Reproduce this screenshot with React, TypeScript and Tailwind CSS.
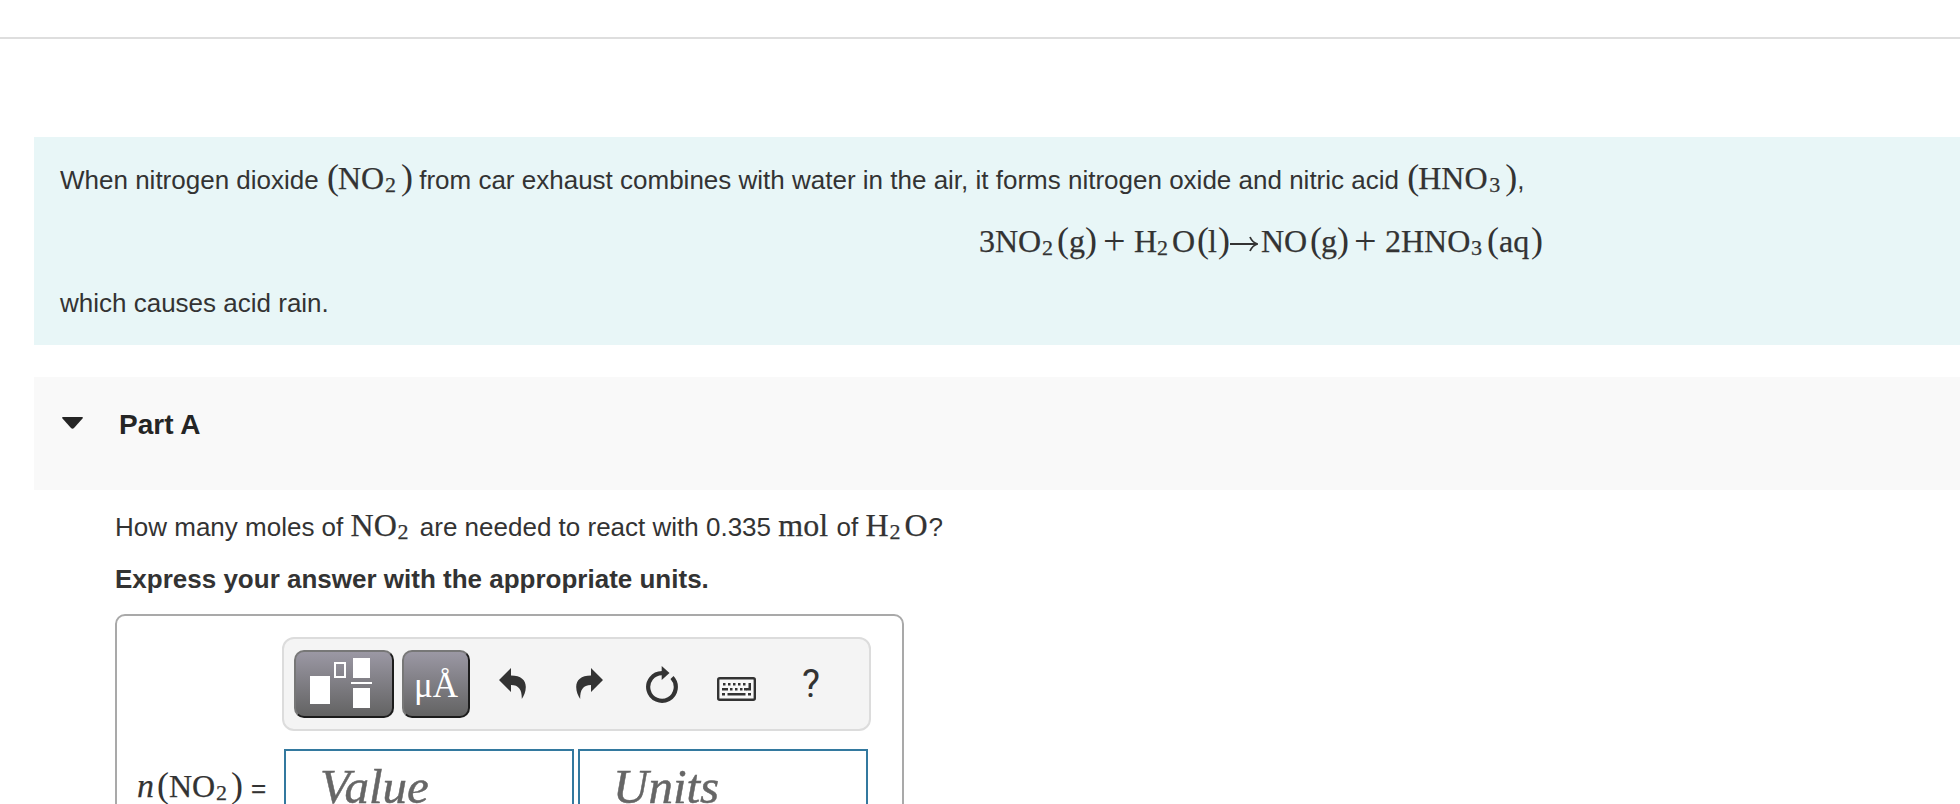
import type { ReactNode } from "react";

const MATH = "font-['Liberation_Serif',serif] text-[32px] [-webkit-text-stroke:0.25px_#333]";

function Tok({ className, children }: { className: string; children: ReactNode }) {
  return <span className={`inline-block leading-none ${className}`}>{children}</span>;
}

function Sub({ className, children }: { className: string; children: ReactNode }) {
  return (
    <span className={`mr-px -ml-px inline-block translate-y-[3px] text-[22px] leading-none ${className}`}>
      {children}
    </span>
  );
}

function Paren({ className, children }: { className: string; children: ReactNode }) {
  return (
    <span className={`inline-block text-[36px] leading-none [-webkit-text-stroke:0px] ${className}`}>
      {children}
    </span>
  );
}

function Plus() {
  return (
    <span className="inline-block w-[31px] translate-y-[2px] text-[40px] leading-none [-webkit-text-stroke:0px]">
      +
    </span>
  );
}

function ArrowIcon({ flip = false }: { flip?: boolean }) {
  return (
    <svg
      viewBox="0 0 27 31"
      className={flip ? "h-[31px] w-[27px] -scale-x-100" : "h-[31px] w-[27px]"}
      fill="#333"
    >
      <path d="M0 12 12 0V7.500C22 7.500 26.800 12 26.800 19 26.800 24 24.800 28 22.800 31 23 22 20 17 12 17V24Z" />
    </svg>
  );
}

function ResetIcon() {
  return (
    <svg viewBox="0 0 32 37" className="h-[37px] w-8">
      <path
        d="M26 11.500A13.800 13.800 0 1 1 16 7.200"
        fill="none"
        stroke="#333"
        strokeWidth="4.200"
      />
      <path d="M15.700 0 23.500 7 15.700 14Z" fill="#333" />
    </svg>
  );
}

function KeyboardIcon() {
  return (
    <svg viewBox="0 0 39 24" className="h-6 w-[39px]" fill="#333">
      <rect x="1.200" y="1.200" width="36.600" height="21.600" rx="1.500" fill="#f8f8f8" stroke="#333" strokeWidth="2.400" />
      {[6, 11, 16, 21, 26].map((x) => (
        <rect key={x} x={x} y="6" width="2.500" height="2.500" />
      ))}
      {[13, 18, 23, 27].map((x) => (
        <rect key={x} x={x} y="11" width="2.500" height="2.500" />
      ))}
      <path d="M5 11h6v2.500H5zM31.500 6H34v7.500h-5V11h2.500zM5 16h3v2.500H5zM10.500 16h18v2.500h-18zM31 16h3v2.500h-3z" />
    </svg>
  );
}

function TemplatesIcon() {
  return (
    <svg viewBox="0 0 62 50" className="h-[50px] w-[62px]" fill="#fff">
      <rect x="0" y="18" width="20" height="28" />
      <rect x="25" y="5" width="10" height="14" fill="none" stroke="#fff" strokeWidth="2" />
      <rect x="43" y="0" width="17" height="20" />
      <rect x="41" y="24" width="21" height="2" />
      <rect x="43" y="30" width="17" height="20" />
    </svg>
  );
}

const BUTTON =
  "flex h-[68px] rounded-[10px] border-2 border-t-[#777] border-l-[#777] border-r-[#1c1c1c] border-b-[#1c1c1c] bg-linear-to-b from-[#9b98a4] to-[#636363]";

const FIELD =
  "h-[80px] w-[290px] border-2 border-[#33799f] bg-white pt-[12px] font-['Liberation_Serif',serif] text-[49px] leading-[48px] text-[#666] italic [-webkit-text-stroke:0.5px_#666]";

export default function App() {
  return (
    <div className="h-[804px] w-[1960px] overflow-hidden bg-white font-['Liberation_Sans',sans-serif] text-[26px] whitespace-nowrap text-[#333]">
      <div className="h-[39px] border-b-2 border-[#dedede]" />

      <section className="mt-[98px] ml-[34px] h-[208px] bg-[#e8f6f7] pt-5 pl-[26px]">
        <div className="h-[62px] leading-[42px]">
          When nitrogen dioxide{" "}
          <span className={`ml-px ${MATH}`}>
            <Paren className="w-[11px]">(</Paren>
            <Tok className="w-[48px]">NO</Tok>
            <Sub className="w-[15px]">2</Sub>
            <Paren className="w-[11px]">)</Paren>
          </span>{" "}
          from car exhaust combines with water in the air, it forms nitrogen oxide and nitric acid{" "}
          <span className={`ml-px ${MATH}`}>
            <Paren className="w-[11px]">(</Paren>
            <Tok className="w-[72px]">HNO</Tok>
            <Sub className="w-[15px]">3</Sub>
            <Paren className="w-[12px]">)</Paren>
          </span>
          ,
        </div>
        <div className={`h-[63px] pl-[919px] leading-[42px] ${MATH}`}>
          <Tok className="w-[16px]">3</Tok>
          <Tok className="w-[48px]">NO</Tok>
          <Sub className="w-[14px]">2</Sub>
          <Paren className="w-[12px]">(</Paren>
          <Tok className="w-[16px]">g</Tok>
          <Paren className="w-[18px]">)</Paren>
          <Plus />
          <Tok className="w-[24px]">H</Tok>
          <Sub className="w-[14px]">2</Sub>
          <Tok className="w-[25px]">O</Tok>
          <Paren className="w-[11px]">(</Paren>
          <Tok className="w-[10px]">l</Tok>
          <Paren className="w-[12px]">)</Paren>
          <svg viewBox="0 0 28 18" className="mr-[3px] inline-block h-[18px] w-7 align-[-1px]">
            <path d="M0 9H27M20 2C21.500 5.500 24 8 27.500 9 24 10 21.500 12.500 20 16" fill="none" stroke="#333" strokeWidth="1.800" />
          </svg>
          <Tok className="w-[49px]">NO</Tok>
          <Paren className="w-[11px]">(</Paren>
          <Tok className="w-[16px]">g</Tok>
          <Paren className="w-[17px]">)</Paren>
          <Plus />
          <Tok className="w-[16px]">2</Tok>
          <Tok className="w-[71px]">HNO</Tok>
          <Sub className="w-[15px]">3</Sub>
          <Paren className="w-[12px]">(</Paren>
          <Tok className="w-[32px]">aq</Tok>
          <Paren className="w-[12px]">)</Paren>
        </div>
        <div className="leading-[42px]">which causes acid rain.</div>
      </section>

      <section className="mt-8 ml-[34px] flex h-[113px] bg-[#f9f9f9] pt-[30px] pl-7">
        <svg viewBox="0 0 21 12" className="mt-[10px] h-3 w-[21px]" fill="#252525">
          <path d="M1 0H20Q21.500 0 20.500 1.500L12 11Q10.500 12.500 9 11L.5 1.500Q-.5 0 1 0Z" />
        </svg>
        <h2 className="ml-[36px] text-[28px] leading-9 font-bold text-[#252525]">Part A</h2>
      </section>

      <div className="pl-[115px]">
        <p className="mt-[14px] h-[54px] leading-[42px]">
          How many moles of{" "}
          <span className={MATH}>
            <Tok className="w-[48px]">NO</Tok>
            <Sub className="w-[14px]">2</Sub>
          </span>{" "}
          are needed to react with 0.335{" "}
          <span className={MATH}>
            <Tok className="w-[51px]">mol</Tok>
          </span>{" "}
          of{" "}
          <span className={MATH}>
            <Tok className="w-[25px]">H</Tok>
            <Sub className="w-[14px]">2</Sub>
            <Tok className="w-[24px]">O</Tok>
          </span>
          ?
        </p>
        <p className="h-[56px] leading-[42px] font-bold">
          Express your answer with the appropriate units.
        </p>

        <div className="h-[220px] w-[789px] rounded-t-[10px] border-2 border-[#a9a9a9] pt-[21px]">
          <div className="ml-[165px] flex h-[94px] w-[589px] items-start rounded-[12px] border-2 border-[#dcdcdc] bg-[#f4f4f4] pt-[11px] pl-[10px]">
            <button className={`${BUTTON} w-[100px] pt-[6px] pl-[14px]`}>
              <TemplatesIcon />
            </button>
            <button
              className={`${BUTTON} ml-2 w-[68px] justify-center pt-[10px] font-['Liberation_Serif',serif] text-[35px] leading-[48px] text-white`}
            >
              μÅ
            </button>
            <div className="mt-[18px] ml-[29px] flex h-8 w-[340px] items-start">
              <ArrowIcon />
              <div className="ml-[50px]">
                <ArrowIcon flip />
              </div>
              <div className="-mt-[2px] ml-[43px]">
                <ResetIcon />
              </div>
              <div className="mt-[9px] ml-[39px]">
                <KeyboardIcon />
              </div>
              <span className="mt-px ml-[46px] font-['Roboto',sans-serif] text-[38px] leading-[30px]">?</span>
            </div>
          </div>
          <div className="mt-[18px] flex">
            <div className={`w-[167px] pt-[16px] pl-[20px] leading-[42px] ${MATH}`}>
              <Tok className="w-[20px] text-[34px] italic">n</Tok>
              <Paren className="w-[12px]">(</Paren>
              <Tok className="w-[48px]">NO</Tok>
              <Sub className="w-[14px]">2</Sub>
              <Paren className="w-[20px]">)</Paren>
              <span className="font-['Liberation_Sans',sans-serif] text-[26px]">=</span>
            </div>
            <div className={`${FIELD} pl-[34px]`}>Value</div>
            <div className={`${FIELD} ml-1 pl-[33px]`}>Units</div>
          </div>
        </div>
      </div>
    </div>
  );
}
